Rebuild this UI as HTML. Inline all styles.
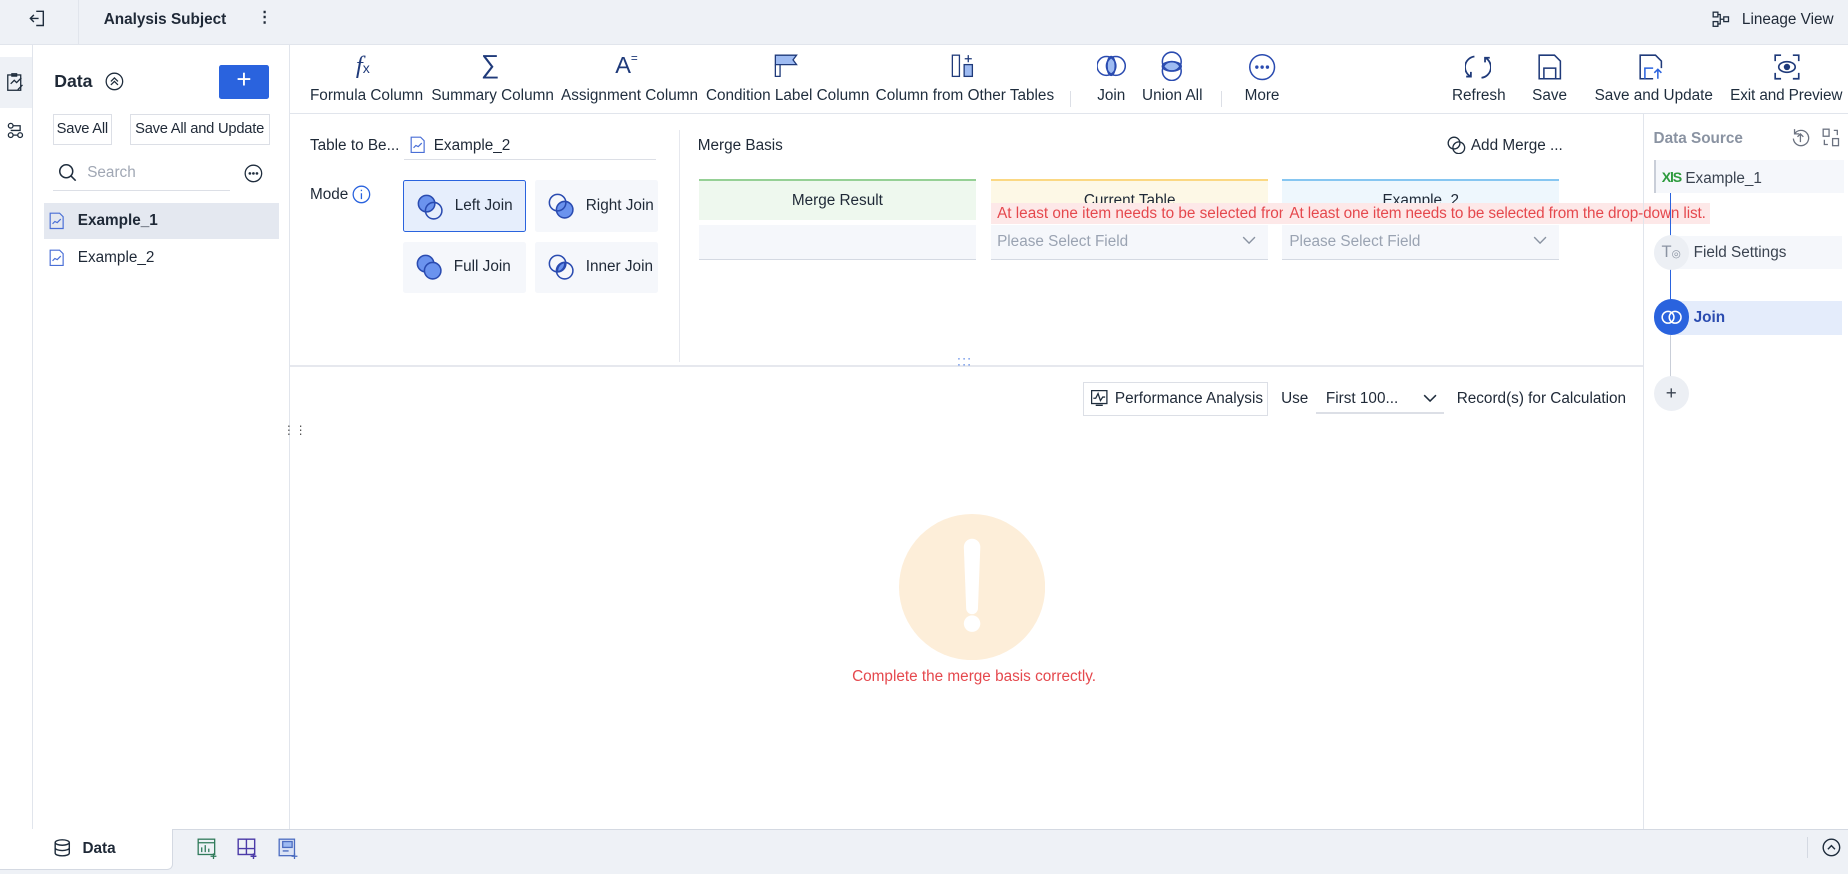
<!DOCTYPE html>
<html><head><meta charset="utf-8"><style>
html{zoom:1.178571}
body{margin:0;width:1568px;height:741px;position:relative;overflow:hidden;font-family:"Liberation Sans",sans-serif;font-size:13px;color:#1f2937;background:#fff}
.a{position:absolute;white-space:nowrap}
.tb{position:absolute;top:74px;font-size:13px;color:#1f2d3d;white-space:nowrap}
svg{display:block}
.btn{position:absolute;border:1px solid #dcdfe6;background:#fff;height:24px;line-height:24px;text-align:center;font-size:12.5px;white-space:nowrap;overflow:hidden;letter-spacing:-0.2px}
.mode{position:absolute;width:104px;height:44px;background:#f5f7fb;border-radius:2px}
.mode span{position:absolute;left:43px;top:14px}
.mode svg{position:absolute;left:10px;top:10px}
</style></head><body>
<div class="a" style="left:0;top:0;width:1568px;height:37px;background:#eef1f6;border-bottom:1px solid #e1e5ec"></div>
<div class="a" style="left:66px;top:0;width:1px;height:37px;background:#e1e5ec"></div>
<svg class="a" style="left:24px;top:8px" width="16" height="16" viewBox="0 0 16 16" fill="none" stroke="#1f2d3d" stroke-width="1.2"><path d="M7 2h6v12H7M2 8h7M5 5L2 8l3 3"/></svg>
<div class="a" style="left:88px;top:9px;font-weight:bold;font-size:13px">Analysis Subject</div>
<div class="a" style="left:218px;top:7px;font-size:13px;font-weight:bold">⋮</div>
<svg class="a" style="left:1453px;top:9px" width="16" height="14" viewBox="0 0 16 14" fill="none" stroke="#1f2d3d" stroke-width="1.1"><rect x="1" y="1" width="4" height="4"/><rect x="1" y="9" width="4" height="4"/><rect x="10" y="5" width="4" height="4"/><path d="M5 3h2v8H5M7 7h3"/></svg>
<div class="a" style="left:1478px;top:9px">Lineage View</div>

<div class="a" style="left:27px;top:38px;width:1px;height:665px;background:#e1e5ec"></div>
<div class="a" style="left:0;top:48px;width:27px;height:44px;background:#eef1f6"></div>
<svg class="a" style="left:5px;top:61px" width="16" height="17" viewBox="0 0 16 17" fill="none" stroke="#1f2d3d" stroke-width="1.1"><rect x="1.5" y="2.5" width="11" height="13"/><path d="M5 1.5h4v2H5zM4 10l3-3 2 2 4-4M10 15l4-4"/></svg>
<svg class="a" style="left:5px;top:103px" width="16" height="16" viewBox="0 0 16 16" fill="none" stroke="#1f2d3d" stroke-width="1.1"><circle cx="4" cy="4" r="2"/><circle cx="12" cy="12" r="2"/><circle cx="4" cy="12" r="2"/><path d="M6 4h6v4H4M10 12H6"/></svg>

<div class="a" style="left:245px;top:38px;width:1px;height:665px;background:#e1e5ec"></div>
<div class="a" style="left:46px;top:60px;font-weight:bold;font-size:15px">Data</div>
<svg class="a" style="left:89px;top:61px" width="16" height="16" viewBox="0 0 16 16" fill="none" stroke="#1f2d3d" stroke-width="1.1"><circle cx="8" cy="8" r="7"/><path d="M5 8l3-3 3 3M5 11l3-3 3 3"/></svg>
<div class="a" style="left:186px;top:55px;width:42px;height:29px;background:#2a63de;border-radius:2px;color:#fff;font-size:22px;text-align:center;line-height:27px">+</div>
<div class="btn" style="left:45px;top:97px;width:48px">Save All</div>
<div class="btn" style="left:110px;top:97px;width:117px">Save All and Update</div>
<svg class="a" style="left:49px;top:138px" width="16" height="16" viewBox="0 0 16 16" fill="none" stroke="#1f2d3d" stroke-width="1.3"><circle cx="7" cy="7" r="5.5"/><path d="M11 11l4 4"/></svg>
<div class="a" style="left:74px;top:139px;color:#a0a7b4">Search</div>
<div class="a" style="left:45px;top:161px;width:150px;height:1px;background:#dcdfe6"></div>
<svg class="a" style="left:207px;top:139px" width="16" height="16" viewBox="0 0 16 16" fill="none" stroke="#1f2d3d" stroke-width="1.1"><circle cx="8" cy="8" r="7"/><circle cx="5" cy="8" r=".6" fill="#1f2d3d"/><circle cx="8" cy="8" r=".6" fill="#1f2d3d"/><circle cx="11" cy="8" r=".6" fill="#1f2d3d"/></svg>
<div class="a" style="left:37px;top:172px;width:200px;height:31px;background:#e4e8f0"></div>
<svg class="a" style="left:42px;top:180px" width="13" height="15" viewBox="0 0 13 15" fill="none" stroke="#4a6fd6" stroke-width="1"><path d="M1 1h8l3 3v10H1z"/><path d="M3 10l2-2 2 1 3-3"/></svg>
<div class="a" style="left:66px;top:180px;font-weight:bold">Example_1</div>
<svg class="a" style="left:42px;top:211px" width="13" height="15" viewBox="0 0 13 15" fill="none" stroke="#4a6fd6" stroke-width="1"><path d="M1 1h8l3 3v10H1z"/><path d="M3 10l2-2 2 1 3-3"/></svg>
<div class="a" style="left:66px;top:211px">Example_2</div>
<div class="a" style="left:240px;top:362px;color:#555;font-size:10px;line-height:6px;white-space:normal">⋮⋮</div>

<div class="a" style="left:246px;top:96px;width:1322px;height:1px;background:#e1e5ec"></div>
<div class="a" style="left:302px;top:44px;font-family:'Liberation Serif',serif;font-style:italic;font-size:21px;color:#1f3a7a">f<span style="font-size:12px;font-style:normal;font-family:'Liberation Sans'">x</span></div>
<div class="tb" style="left:263px">Formula Column</div>
<div class="a" style="left:408px;top:43px;font-size:22px;color:#1f3a7a">∑</div>
<div class="tb" style="left:366px">Summary Column</div>
<div class="a" style="left:522px;top:44px;font-size:20px;color:#1f3a7a">A<span style="font-size:10px;vertical-align:top">=</span></div>
<div class="tb" style="left:476px">Assignment Column</div>
<svg class="a" style="left:656px;top:46px" width="22" height="20" viewBox="0 0 22 20" fill="none" stroke="#1f3a7a" stroke-width="1.1"><path d="M2 1h18l-3 4 3 4H2z" fill="#9ebbf2"/><path d="M2 9v10h4V9"/></svg>
<div class="tb" style="left:599px">Condition Label Column</div>
<svg class="a" style="left:806px;top:46px" width="22" height="20" viewBox="0 0 22 20" fill="none" stroke="#1f3a7a" stroke-width="1.1"><rect x="2" y="1" width="6" height="18"/><rect x="12" y="9" width="7" height="10" fill="#9ebbf2"/><path d="M15.5 1v6M12.5 4h6"/></svg>
<div class="tb" style="left:743px">Column from Other Tables</div>
<div class="a" style="left:908px;top:77px;width:1px;height:14px;background:#dcdfe6"></div>
<svg class="a" style="left:931px;top:45px" width="24" height="22" viewBox="0 0 24 22" fill="none" stroke="#2a4bb0" stroke-width="1.3"><ellipse cx="12" cy="11" rx="3.5" ry="8" fill="#9ebbf2"/><circle cx="8" cy="11" r="8"/><circle cx="16" cy="11" r="8"/></svg>
<div class="tb" style="left:931px">Join</div>
<svg class="a" style="left:984px;top:43px" width="20" height="26" viewBox="0 0 20 26" fill="none" stroke="#2a4bb0" stroke-width="1.3"><ellipse cx="10" cy="13" rx="8" ry="4" fill="#9ebbf2"/><circle cx="10" cy="9" r="8"/><circle cx="10" cy="17" r="8"/></svg>
<div class="tb" style="left:969px">Union All</div>
<div class="a" style="left:1036px;top:77px;width:1px;height:14px;background:#dcdfe6"></div>
<svg class="a" style="left:1059px;top:45px" width="24" height="24" viewBox="0 0 24 24" fill="none" stroke="#2a4bb0" stroke-width="1.3"><circle cx="12" cy="12" r="10.5"/><circle cx="7.5" cy="12" r=".8" fill="#2a4bb0"/><circle cx="12" cy="12" r=".8" fill="#2a4bb0"/><circle cx="16.5" cy="12" r=".8" fill="#2a4bb0"/></svg>
<div class="tb" style="left:1056px">More</div>
<svg class="a" style="left:1243px;top:45px" width="22" height="24" viewBox="0 0 22 24" fill="none" stroke="#1f3a7a" stroke-width="1.5"><path d="M8 3A9 9 0 0 0 5 20M14 21A9 9 0 0 0 17 4"/><path d="M5 16v4h-4M17 8V4h4"/></svg>
<div class="tb" style="left:1232px">Refresh</div>
<svg class="a" style="left:1305px;top:46px" width="20" height="22" viewBox="0 0 20 22" fill="none" stroke="#1f3a7a" stroke-width="1.3"><path d="M1 1h13l5 5v15H1z"/><rect x="5" y="12" width="10" height="9"/></svg>
<div class="tb" style="left:1300px">Save</div>
<svg class="a" style="left:1391px;top:46px" width="22" height="22" viewBox="0 0 22 22" fill="none" stroke="#1f3a7a" stroke-width="1.3"><path d="M12 21H1V1h13l5 5v6"/><path d="M5 21v-9h7M16 21v-7M13 16l3-3 3 3" stroke="#2a63de"/></svg>
<div class="tb" style="left:1353px">Save and Update</div>
<svg class="a" style="left:1505px;top:46px" width="22" height="22" viewBox="0 0 22 22" fill="none" stroke="#1f3a7a" stroke-width="1.4"><path d="M1 6V1h5M16 1h5v5M21 16v5h-5M6 21H1v-5"/><ellipse cx="11" cy="11" rx="7" ry="4.5"/><circle cx="11" cy="11" r="2" fill="#1f3a7a"/></svg>
<div class="tb" style="left:1468px;letter-spacing:-0.1px">Exit and Preview</div>

<div class="a" style="left:263px;top:116px">Table to Be...</div>
<svg class="a" style="left:348px;top:115px" width="13" height="15" viewBox="0 0 13 15" fill="none" stroke="#4a6fd6" stroke-width="1"><path d="M1 1h8l3 3v10H1z"/><path d="M3 10l2-2 2 1 3-3"/></svg>
<div class="a" style="left:368px;top:116px">Example_2</div>
<div class="a" style="left:343px;top:135px;width:214px;height:1px;background:#dcdfe6"></div>
<div class="a" style="left:263px;top:158px">Mode</div>
<svg class="a" style="left:299px;top:157px" width="16" height="16" viewBox="0 0 16 16" fill="none" stroke="#2a63de" stroke-width="1.1"><circle cx="8" cy="8" r="7"/><path d="M8 7v5M8 4v1.2"/></svg>
<div class="mode" style="left:342px;top:153px;background:#e6eefc;border:1px solid #2a63de;width:103px;height:42px"><svg width="24" height="24" viewBox="0 0 24 24" fill="none" stroke="#2a4bb0" stroke-width="1.3"><circle cx="9" cy="9" r="7" fill="#6b93ee"/><circle cx="15" cy="15" r="7"/></svg><span style="top:13px">Left Join</span></div>
<div class="mode" style="left:454px;top:153px"><svg width="24" height="24" viewBox="0 0 24 24" fill="none" stroke="#2a4bb0" stroke-width="1.3"><circle cx="15" cy="15" r="7" fill="#6b93ee"/><circle cx="9" cy="9" r="7"/></svg><span>Right Join</span></div>
<div class="mode" style="left:342px;top:205px"><svg width="24" height="24" viewBox="0 0 24 24" fill="none" stroke="#2a4bb0" stroke-width="1.3"><circle cx="9" cy="9" r="7" fill="#6b93ee"/><circle cx="15" cy="15" r="7" fill="#6b93ee"/></svg><span>Full Join</span></div>
<div class="mode" style="left:454px;top:205px"><svg width="24" height="24" viewBox="0 0 24 24" fill="none" stroke="#2a4bb0" stroke-width="1.3"><circle cx="9" cy="9" r="7"/><circle cx="15" cy="15" r="7"/><path d="M15 8a7 7 0 0 1-6 8 7 7 0 0 1 6-8z" fill="#6b93ee"/></svg><span>Inner Join</span></div>
<div class="a" style="left:576px;top:110px;width:1px;height:197px;background:#e6e8ee"></div>
<div class="a" style="left:592px;top:116px">Merge Basis</div>
<svg class="a" style="left:1228px;top:115px" width="16" height="16" viewBox="0 0 16 16" fill="none" stroke="#1f2d3d" stroke-width="1.1"><circle cx="6" cy="6" r="5"/><circle cx="10" cy="10" r="5"/></svg>
<div class="a" style="left:1248px;top:116px">Add Merge ...</div>
<div class="a" style="left:593px;top:152px;width:235px;height:33px;background:#eef8ee;border-top:2px solid #95d095;text-align:center;line-height:34px">Merge Result</div>
<div class="a" style="left:593px;top:191px;width:235px;height:29px;background:#f5f7fb;border-bottom:1px solid #d4d9e2"></div>
<div class="a" style="left:841px;top:152px;width:235px;height:33px;background:#fdf8e6;border-top:2px solid #fbd883;text-align:center;line-height:34px">Current Table</div>
<div class="a" style="left:841px;top:191px;width:235px;height:29px;background:#f5f7fb;border-bottom:1px solid #d4d9e2"></div>
<div class="a" style="left:846px;top:198px;color:#9aa3b2">Please Select Field</div>
<svg class="a" style="left:1054px;top:200px" width="12" height="8" viewBox="0 0 12 8" fill="none" stroke="#8a93a2" stroke-width="1.2"><path d="M1 1l5 5 5-5"/></svg>
<div class="a" style="left:1088px;top:152px;width:235px;height:33px;background:#eef7fd;border-top:2px solid #86c6f1;text-align:center;line-height:34px">Example_2</div>
<div class="a" style="left:1088px;top:191px;width:235px;height:29px;background:#f5f7fb;border-bottom:1px solid #d4d9e2"></div>
<div class="a" style="left:1094px;top:198px;color:#9aa3b2">Please Select Field</div>
<svg class="a" style="left:1301px;top:200px" width="12" height="8" viewBox="0 0 12 8" fill="none" stroke="#8a93a2" stroke-width="1.2"><path d="M1 1l5 5 5-5"/></svg>
<div class="a" style="left:841px;top:172px;width:248px;height:18px;background:#fde8e8;color:#e5484d;line-height:18px;overflow:hidden;padding-left:5px;box-sizing:border-box">At least one item needs to be selected from the drop-down list.</div>
<div class="a" style="left:1089px;top:172px;width:362px;height:18px;background:#fde8e8;color:#e5484d;line-height:18px;padding-left:5px;box-sizing:border-box;letter-spacing:-0.1px">At least one item needs to be selected from the drop-down list.</div>
<div class="a" style="left:246px;top:310px;width:1148px;height:1px;background:#e6e8ee"></div>
<div class="a" style="left:812px;top:302px;color:#2a63de;font-size:10px;letter-spacing:1px;line-height:5px;white-space:normal;width:20px">···<br>···</div>

<div class="a" style="left:919px;top:324px;width:155px;height:27px;border:1px solid #dcdfe6"></div>
<svg class="a" style="left:926px;top:331px" width="14" height="14" viewBox="0 0 14 14" fill="none" stroke="#1f2d3d" stroke-width="1.1"><rect x=".5" y=".5" width="13" height="11"/><path d="M2 7h2l2-4 2 6 2-3h2M4 13h6"/></svg>
<div class="a" style="left:946px;top:331px">Performance Analysis</div>
<div class="a" style="left:1087px;top:331px">Use</div>
<div class="a" style="left:1125px;top:331px">First 100...</div>
<svg class="a" style="left:1207px;top:334px" width="12" height="8" viewBox="0 0 12 8" fill="none" stroke="#1f2d3d" stroke-width="1.3"><path d="M1 1l5 5 5-5"/></svg>
<div class="a" style="left:1117px;top:350px;width:108px;height:1px;background:#dcdfe6"></div>
<div class="a" style="left:1236px;top:331px">Record(s) for Calculation</div>
<svg class="a" style="left:763px;top:436px" width="124" height="124" viewBox="0 0 124 124"><circle cx="62" cy="62" r="62" fill="#fdeed9"/><path d="M55 28a7 7 0 0 1 14 0l-2 52a5 5 0 0 1-10 0z" fill="#fff"/><circle cx="62" cy="93" r="7" fill="#fff"/></svg>
<div class="a" style="left:723px;top:567px;color:#e5484d">Complete the merge basis correctly.</div>

<div class="a" style="left:1394px;top:97px;width:1px;height:606px;background:#e1e5ec"></div>
<div class="a" style="left:1403px;top:110px;color:#8a93a2;font-weight:bold">Data Source</div>
<svg class="a" style="left:1520px;top:109px" width="16" height="16" viewBox="0 0 16 16" fill="none" stroke="#6b7280" stroke-width="1.1"><path d="M3 5a6.5 6.5 0 1 1-1 4M3 1v4h4M8 12V5M5.5 7.5L8 5l2.5 2.5"/></svg>
<svg class="a" style="left:1546px;top:109px" width="15" height="16" viewBox="0 0 15 16" fill="none" stroke="#6b7280" stroke-width="1.1"><rect x="1" y="1" width="5" height="6"/><rect x="9" y="9" width="5" height="6"/><path d="M10 2h3v4M2 10v4h3"/></svg>
<div class="a" style="left:1403px;top:136px;width:160px;height:28px;background:#f5f7fb;border-left:2px solid #c9ced8"></div>
<div class="a" style="left:1410px;top:143px;color:#2e9b3e;font-weight:bold;font-size:12px;letter-spacing:-1px">XlS</div>
<div class="a" style="left:1430px;top:144px;color:#3a4350">Example_1</div>
<div class="a" style="left:1417px;top:164px;width:1px;height:140px;background:#2a63de"></div>
<div class="a" style="left:1417px;top:284px;width:1px;height:40px;background:#c9ced8"></div>
<div class="a" style="left:1403px;top:200px;width:160px;height:28px;background:#f5f7fb;border-radius:14px 0 0 14px"></div>
<div class="a" style="left:1403px;top:199px;width:30px;height:30px;border-radius:15px;background:#eceff4;color:#8a93a2;text-align:center;line-height:30px;font-size:14px">T<span style="font-size:9px">◎</span></div>
<div class="a" style="left:1437px;top:207px;color:#3a4350">Field Settings</div>
<div class="a" style="left:1403px;top:255px;width:160px;height:29px;background:#e4ecfb;border-radius:15px 0 0 15px"></div>
<div class="a" style="left:1403px;top:254px;width:30px;height:30px;border-radius:15px;background:#2a63de"></div>
<svg class="a" style="left:1409px;top:262px" width="18" height="14" viewBox="0 0 18 14" fill="none" stroke="#fff" stroke-width="1.3"><circle cx="6" cy="7" r="5"/><circle cx="12" cy="7" r="5"/></svg>
<div class="a" style="left:1437px;top:262px;color:#2a4bb0;font-weight:bold">Join</div>
<div class="a" style="left:1403px;top:319px;width:30px;height:30px;border-radius:15px;background:#eceff4;text-align:center;line-height:28px;font-size:16px;color:#3a4350">+</div>

<div class="a" style="left:0;top:703px;width:1568px;height:38px;background:#eef1f6;border-top:1px solid #d4d9e2"></div>
<div class="a" style="left:0;top:703px;width:146px;height:34px;background:#fff;border-radius:0 0 5px 0;border-right:1px solid #d4d9e2;border-bottom:1px solid #d4d9e2"></div>
<svg class="a" style="left:46px;top:712px" width="14" height="15" viewBox="0 0 14 15" fill="none" stroke="#1f2d3d" stroke-width="1.2"><ellipse cx="7" cy="3" rx="6" ry="2.3"/><path d="M1 3v9c0 1.3 2.7 2.3 6 2.3s6-1 6-2.3V3M1 7.5c0 1.3 2.7 2.3 6 2.3s6-1 6-2.3"/></svg>
<div class="a" style="left:70px;top:713px;font-weight:bold">Data</div>
<svg class="a" style="left:167px;top:711px" width="18" height="18" viewBox="0 0 18 18" fill="none" stroke="#2f7a5a" stroke-width="1.1"><rect x="1" y="1" width="14" height="13"/><path d="M1 4h14M4 12V8M7 12V6M10 12V9M14 13v5M11.5 15.5h5"/></svg>
<svg class="a" style="left:201px;top:711px" width="18" height="18" viewBox="0 0 18 18" fill="none" stroke="#4b3aa8" stroke-width="1.2"><rect x="1" y="1" width="14" height="13"/><path d="M1 9h14M8 1v13M14 13v5M11.5 15.5h5"/></svg>
<svg class="a" style="left:236px;top:711px" width="18" height="18" viewBox="0 0 18 18" fill="none" stroke="#4b6cc0" stroke-width="1.1"><rect x="1" y="1" width="13" height="14" fill="#dbe3f5"/><rect x="4" y="3" width="8" height="5" fill="#9ebbf2"/><path d="M14 13v5M11.5 15.5h5M4 11h5"/></svg>
<div class="a" style="left:1533px;top:710px;width:1px;height:18px;background:#d4d9e2"></div>
<svg class="a" style="left:1546px;top:711px" width="16" height="16" viewBox="0 0 16 16" fill="none" stroke="#1f2d3d" stroke-width="1.2"><circle cx="8" cy="8" r="7"/><path d="M5 9.5l3-3 3 3"/></svg>
</body></html>
